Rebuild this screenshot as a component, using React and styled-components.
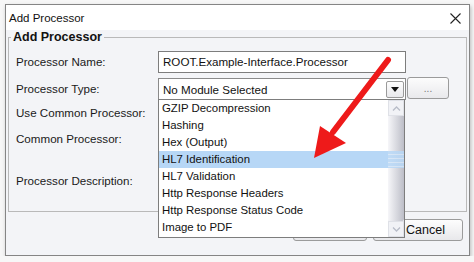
import styled, { createGlobalStyle } from "styled-components";

const items = [
    "GZIP Decompression",
    "Hashing",
    "Hex (Output)",
    "HL7 Identification",
    "HL7 Validation",
    "Http Response Headers",
    "Http Response Status Code",
    "Image to PDF",
];

export default function App() {
    return (
        <>
            <GlobalStyle />
            <Window>
                <TitleBar>
                    <TitleText>Add Processor</TitleText>
                    <CloseBtn>
                        <svg width="11" height="11" viewBox="0 0 11 11">
                            <path d="M0.5 0.5 L10.5 10.5 M10.5 0.5 L0.5 10.5" stroke="#222" strokeWidth="1.1" />
                        </svg>
                    </CloseBtn>
                </TitleBar>

                <Body>
                    <Group>
                        <Legend>Add Processor</Legend>
                        <Form>
                            <Label $top>Processor Name:</Label>
                            <Cell>
                                <TextField>ROOT.Example-Interface.Processor</TextField>
                            </Cell>

                            <Label $top>Processor Type:</Label>
                            <Cell>
                                <ComboRow>
                                    <Combo>
                                        <ComboText>No Module Selected</ComboText>
                                        <ArrowBtn>
                                            <svg width="8" height="5" viewBox="0 0 8 5">
                                                <path d="M0 0 H8 L4 5 Z" fill="#111" />
                                            </svg>
                                        </ArrowBtn>
                                        <List>
                                            <Items>
                                                {items.map((it, i) => (
                                                    <Item key={it} $active={i === 3}>{it}</Item>
                                                ))}
                                            </Items>
                                            <ScrollBar>
                                                <ScrollBtn>
                                                    <svg width="9" height="5" viewBox="0 0 9 5">
                                                        <path d="M1 4.5 L4.5 1 L8 4.5" stroke="#b8bcc8" strokeWidth="1.3" fill="none" />
                                                    </svg>
                                                </ScrollBtn>
                                                <Thumb>
                                                    <Grip />
                                                </Thumb>
                                                <ScrollBtn>
                                                    <svg width="9" height="5" viewBox="0 0 9 5">
                                                        <path d="M1 0.5 L4.5 4 L8 0.5" stroke="#b8bcc8" strokeWidth="1.3" fill="none" />
                                                    </svg>
                                                </ScrollBtn>
                                            </ScrollBar>
                                        </List>
                                    </Combo>
                                    <DotsBtn>...</DotsBtn>
                                </ComboRow>
                            </Cell>

                            <Label>Use Common Processor:</Label>
                            <Cell />

                            <Label>Common Processor:</Label>
                            <Cell />

                            <Label>Processor Description:</Label>
                            <Cell />
                        </Form>
                    </Group>

                    <Footer>
                        <Button $w={74}>OK</Button>
                        <Button $w={90} $pad={17}>Cancel</Button>
                    </Footer>
                </Body>

                <Overlay width="463" height="251" viewBox="6 5 463 251">
                    <line x1="388" y1="60" x2="333" y2="132" stroke="#ee1a1a" strokeWidth="6" strokeLinecap="round" />
                    <polygon points="314,158 320,126 346,143" fill="#ee1a1a" />
                </Overlay>
            </Window>
        </>
    );
}

const GlobalStyle = createGlobalStyle`
    body {
        margin: 0;
        background: #f7f7f7;
        font-family: "Liberation Sans", Arial, sans-serif;
    }
`

const Window = styled.div`
    position: relative;
    box-sizing: border-box;
    width: 465px;
    height: 252px;
    margin: 4px 0 0 5px;
    border: 1px solid #858585;
    background: #f3f4f7;
    box-shadow: 1px 2px 4px rgba(0, 0, 0, 0.25);
    display: flex;
    flex-direction: column;
`

const TitleBar = styled.div`
    height: 25px;
    background: #fff;
    display: flex;
    align-items: center;
    justify-content: space-between;
    padding: 0 8px 0 3px;
`

const TitleText = styled.span`
    font-size: 11.5px;
    color: #111;
    margin-top: 1px;
`

const CloseBtn = styled.span`
    display: flex;
    margin-top: 1px;
`

const Body = styled.div`
    padding: 0 2px;
    flex: 1;
`

const Group = styled.fieldset`
    margin: 0;
    padding: 7px 2px 1px 7px;
    border: 1px solid #b9b9b9;
    min-width: 0;
`

const Legend = styled.legend`
    margin-left: -5px;
    padding: 0 2px;
    font-size: 12.5px;
    line-height: 14px;
    font-weight: bold;
    color: #111;
`

const Form = styled.div`
    display: grid;
    grid-template-columns: 142px 1fr;
    grid-template-rows: 27px 23px 24px 27px 58px;
`

const Label = styled.div`
    font-size: 11.6px;
    color: #1a1a1a;
    line-height: 22px;
    align-self: ${(p) => (p.$top ? "start" : "center")};
`

const Cell = styled.div`
    position: relative;
`

const TextField = styled.div`
    box-sizing: border-box;
    width: 248px;
    height: 22px;
    border: 1px solid #7d7d7d;
    background: #fff;
    padding-left: 4px;
    font-size: 11.6px;
    line-height: 20px;
    color: #111;
`

const ComboRow = styled.div`
    display: flex;
    gap: 1px;
`

const Combo = styled.div`
    position: relative;
    box-sizing: border-box;
    width: 248px;
    height: 22px;
    border: 1px solid #8a8a8a;
    background: #fff;
    display: flex;
    align-items: center;
    justify-content: space-between;
    padding: 0 1px 0 4px;
`

const ComboText = styled.span`
    font-size: 11.6px;
    color: #111;
`

const ArrowBtn = styled.span`
    box-sizing: border-box;
    width: 18px;
    height: 17px;
    border: 1px solid #9a9a9a;
    border-radius: 2px;
    background: linear-gradient(#fdfdfd, #e9e9ec);
    display: flex;
    align-items: center;
    justify-content: center;
`

const DotsBtn = styled.button`
    box-sizing: border-box;
    width: 42px;
    height: 22px;
    margin-top: -1px;
    border: 1px solid #9b9b9b;
    border-radius: 3px;
    background: linear-gradient(#fcfcfc, #e9e9ec);
    font-family: "Liberation Sans", Arial, sans-serif;
    font-size: 10px;
    color: #777;
    padding: 0;
`

const List = styled.div`
    position: absolute;
    top: 100%;
    left: -1px;
    z-index: 5;
    box-sizing: border-box;
    width: 247px;
    height: 139px;
    border: 1px solid #7d7d7d;
    background: #fff;
    display: flex;
`

const Items = styled.div`
    flex: 1;
`

const Item = styled.div`
    height: 17px;
    line-height: 17px;
    padding-left: 3px;
    font-size: 11.4px;
    color: #111;
    background: ${(p) => (p.$active ? "#b7d7f6" : "transparent")};
`

const ScrollBar = styled.div`
    width: 16px;
    display: flex;
    flex-direction: column;
    background: #f0f1f4;
`

const ScrollBtn = styled.div`
    height: 16px;
    display: flex;
    align-items: center;
    justify-content: center;
    background: #f1f2f6;
    border: 1px solid #dfe1e7;
    box-sizing: border-box;
`

const Thumb = styled.div`
    position: relative;
    flex: 1;
    background: linear-gradient(90deg, #f6f6f9, #d4d5dc 60%, #bcbdc7);
    border-radius: 0 0 2px 2px;
`

const Grip = styled.div`
    position: absolute;
    top: 35px;
    left: 0;
    right: 0;
    height: 17px;
    background:
        repeating-linear-gradient(#b7d7f6 0 3px, #d5e6f8 3px 4px);
    opacity: 0.85;
`

const Footer = styled.div`
    display: flex;
    justify-content: flex-end;
    gap: 6px;
    padding: 7px 4px 0 0;
`

const Button = styled.button`
    box-sizing: border-box;
    width: ${(p) => p.$w}px;
    height: 22px;
    border: 1px solid #9b9b9b;
    border-radius: 3px;
    background: linear-gradient(#fdfdfd, #e8e8eb);
    font-family: "Liberation Sans", Arial, sans-serif;
    font-size: 12.5px;
    color: #111;
    text-align: right;
    padding: 0 ${(p) => p.$pad || 20}px 0 0;
`

const Overlay = styled.svg`
    position: absolute;
    top: 0;
    left: 0;
    z-index: 10;
    pointer-events: none;
`
